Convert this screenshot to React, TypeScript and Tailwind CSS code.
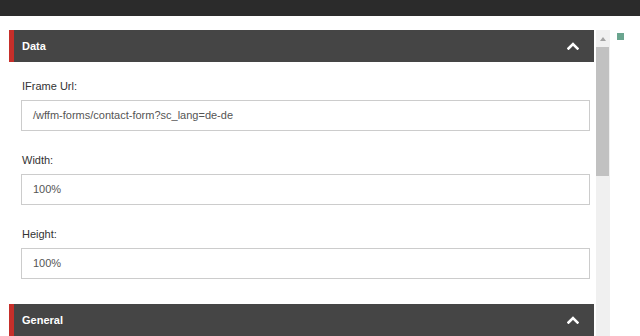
function ChevronUp() {
  return (
    <svg width="12" height="8" viewBox="0 0 12 8" fill="none">
      <path d="M1.5 6.5L6 2L10.5 6.5" stroke="#ffffff" strokeWidth="2.6" strokeLinecap="square" />
    </svg>
  );
}

function SectionHeader({ title }: { title: string }) {
  return (
    <div className="h-[32px] flex items-center justify-between bg-[#454545] border-l-[5px] border-[#c62f2a]">
      <span className="pl-[8px] text-[11px] font-bold text-white">{title}</span>
      <span className="mr-[15px] flex items-center">
        <ChevronUp />
      </span>
    </div>
  );
}

function Field({ label, value, last }: { label: string; value: string; last?: boolean }) {
  return (
    <div className={last ? "mb-[25px]" : "mb-[22px]"}>
      <div className="pl-[1px] text-[11px] leading-[14px] text-[#333]">{label}</div>
      <div className="mt-[7px] h-[31px] flex items-center border border-[#cccccc] px-[11px] text-[11px] text-[#555]">
        {value}
      </div>
    </div>
  );
}

export default function App() {
  return (
    <div className="w-[640px] h-[336px] overflow-hidden bg-white font-['Liberation_Sans',Arial,sans-serif]">
      <div className="h-4 bg-[#2b2b2b]" />
      <div className="flex pt-[14px]">
        <div className="ml-[9px] w-[585px]">
          <SectionHeader title="Data" />
          <div className="pl-[12px] pr-[4px] pt-[17px]">
            <Field label="IFrame Url:" value="/wffm-forms/contact-form?sc_lang=de-de" />
            <Field label="Width:" value="100%" />
            <Field label="Height:" value="100%" last />
          </div>
          <SectionHeader title="General" />
        </div>
        <div className="ml-[2px] w-[14px] h-[306px] bg-[#f0f0f0] flex flex-col">
          <div className="h-[17px] flex items-center justify-center">
            <div className="w-0 h-0 border-l-[3px] border-r-[3px] border-b-[4px] border-l-transparent border-r-transparent border-b-[#a3a3a3]" />
          </div>
          <div className="h-[129px] w-[13px] bg-[#c1c1c1]" />
        </div>
        <div className="ml-[7px] mt-[3px] w-[7px] h-[7px] bg-[#6aa58f]" />
      </div>
    </div>
  );
}
